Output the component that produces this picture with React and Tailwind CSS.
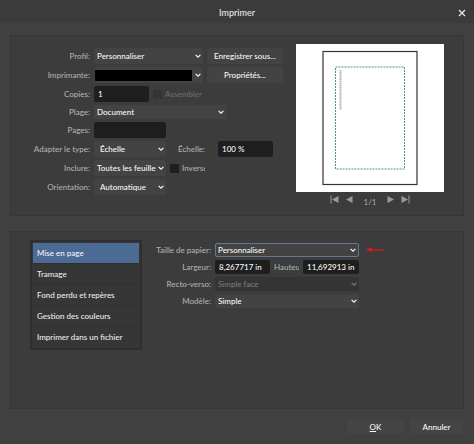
import React from "react";

const FONT = "font-['Lato','Open_Sans',sans-serif]";

function Chevron() {
  return (
    <svg viewBox="0 0 8 8" className="pointer-events-none absolute right-px top-1/2 size-2 -translate-y-1/2" fill="none" stroke="currentColor" strokeWidth="1.2">
      <path d="M1.6 2.8 4 5.2 6.4 2.8" />
    </svg>
  );
}

function Select({ id, value, className = "", pad = "pl-[3px]", look = "bg-[#434343] text-[#f8f8f8]", disabled = false }) {
  return (
    <div className={`relative flex h-full shrink-0 rounded-xs ${look} ${className}`}>
      <select id={id} disabled={disabled} defaultValue={value} className={`w-full appearance-none overflow-hidden bg-transparent pr-[10px] outline-none ${pad}`}>
        <option>{value}</option>
      </select>
      <Chevron />
    </div>
  );
}

function Field({ id, value, className }) {
  return (
    <input id={id} type="text" defaultValue={value} className={`h-full shrink-0 rounded-xs bg-[#1e1e1e] px-[4px] text-[#f8f8f8] outline-none ${className}`} />
  );
}

function Row({ id, label, labelWidth = "w-[64px]", height = "h-[16px]", children }) {
  return (
    <div className={`flex items-center gap-[4px] ${height}`}>
      <label htmlFor={id} className={`shrink-0 whitespace-nowrap text-right ${labelWidth}`}>{label}</label>
      {children}
    </div>
  );
}

function Check({ id, label, disabled, boxClass, className }) {
  return (
    <div className={`flex items-center gap-[3px] overflow-hidden whitespace-nowrap ${className}`}>
      <input id={id} type="checkbox" disabled={disabled} className={`size-[9px] shrink-0 appearance-none ${boxClass}`} />
      <label htmlFor={id}>{label}</label>
    </div>
  );
}

function NavButton({ label, d }) {
  return (
    <button type="button" aria-label={label} className="size-[9px] text-[#999999]">
      <svg viewBox="0 0 9 9" className="size-full" fill="currentColor"><path d={d} /></svg>
    </button>
  );
}

function Preview() {
  return (
    <div className="flex w-[148px] shrink-0 flex-col items-center">
      <svg viewBox="0 0 148 148" className="block w-full" fill="none" role="img" aria-label="Aperçu">
        <rect width="148" height="148" fill="#ffffff" />
        <rect x="27" y="7.5" width="94" height="133" stroke="#3b3035" strokeWidth="1.2" />
        <rect x="39.5" y="23" width="69" height="102" stroke="#4a9292" strokeWidth="1" strokeDasharray="2 1" />
        <path d="M44.5 26v40" stroke="#b9b9b9" strokeWidth="2" strokeDasharray="1.6 0.5" />
      </svg>
      <div className="flex h-[15px] items-center gap-[6px] text-[#a0a0a0]">
        <NavButton label="Première page" d="M0.5 0.5h1v8h-1zM8.5 1v7L2 4.5z" />
        <NavButton label="Page précédente" d="M7.5 1v7L1 4.5z" />
        <span className="w-[20px] pt-[4px] text-center">1/1</span>
        <NavButton label="Page suivante" d="M1.5 1v7L8 4.5z" />
        <NavButton label="Dernière page" d="M7.5 0.5h1v8h-1zM0.5 1v7L7 4.5z" />
      </div>
    </div>
  );
}

const sections = ["Mise en page", "Tramage", "Fond perdu et repères", "Gestion des couleurs", "Imprimer dans un fichier"];

export default function App() {
  return (
    <main className={`flex min-h-screen flex-col bg-[#404040] text-[8px] leading-[12px] font-medium text-[#b0b0b0] ${FONT}`}>
      <header className="grid h-[23px] grid-cols-[1fr_auto_1fr] items-center bg-[#3b3b3b] px-[7px] pt-[2px] text-[#e8e8e8]">
        <h1 className="col-start-2 text-[9px]">Imprimer</h1>
        <button type="button" aria-label="Fermer" className="size-[10px] justify-self-end">
          <svg viewBox="0 0 10 10" className="size-full" stroke="currentColor" strokeWidth="1.3"><path d="M2 2l6 6M8 2l-6 6" /></svg>
        </button>
      </header>

      <section className="mx-[10px] mt-[12px] flex h-[181px] justify-between border border-[#363636] bg-[#3c3c3c] pl-[15px] pr-[19px] pt-[8px]">
        <div className="flex flex-col gap-[3px] pt-[4px]">
          <Row id="profil" label="Profil:">
            <Select id="profil" value="Personnaliser" className="w-[109px]" />
            <button type="button" className="h-[16px] w-[76px] rounded-xs bg-[#434343] text-[#f8f8f8]">Enregistrer sous...</button>
          </Row>
          <Row id="imprimante" label="Imprimante:">
            <div className="relative flex h-full w-[109px] items-center rounded-xs bg-[#434343] pl-px text-[#f8f8f8]">
              <select id="imprimante" className="h-[11px] w-[97px] appearance-none bg-black outline-none" />
              <Chevron />
            </div>
            <button type="button" className="h-[16px] w-[76px] rounded-xs bg-[#434343] text-[#f8f8f8]">Propriétés...</button>
          </Row>
          <Row id="copies" label="Copies:">
            <Field id="copies" value="1" className="w-[55px]" />
            <Check id="assembler" label="Assembler" disabled boxClass="bg-[#343434]" className="text-[#6c6c6c]" />
          </Row>
          <Row id="plage" label="Plage:" height="h-[14px]">
            <Select id="plage" value="Document" className="w-[132px]" />
          </Row>
          <Row id="pages" label="Pages:">
            <Field id="pages" value="" className="w-[72px]" />
          </Row>
          <Row id="adapter" label="Adapter le type:">
            <Select id="adapter" value="Échelle" className="w-[72px]" pad="pl-[6px]" />
            <label htmlFor="echelle" className="w-[44px] pl-[8px]">Échelle:</label>
            <Field id="echelle" value="100 %" className="w-[55px]" />
          </Row>
          <Row id="inclure" label="Inclure:">
            <Select id="inclure" value="Toutes les feuilles" className="w-[72px]" />
            <Check id="inverse" label="Inverser" boxClass="bg-[#1e1e1e]" className="w-[35px]" />
          </Row>
          <Row id="orientation" label="Orientation:">
            <Select id="orientation" value="Automatique" className="w-[72px]" pad="pl-[6px]" />
          </Row>
        </div>
        <Preview />
      </section>

      <section className="mx-[10px] mt-[15px] flex h-[178px] items-start gap-[9px] border border-[#363636] bg-[#3c3c3c] pl-[19px] pt-[8px]">
        <nav className="w-[112px] shrink-0 border-2 border-[#2f2f2f] bg-[#363636] p-px">
          <ul className="divide-y divide-[#2f2f2f]">
            {sections.map((name, i) => (
              <li key={name}>
                <button type="button" className={`block h-[20px] w-full pl-[4px] text-left ${i === 0 ? "bg-[#4c6b94] text-[#f4f4f4]" : "text-[#ececec]"}`}>{name}</button>
              </li>
            ))}
          </ul>
        </nav>
        <div className="flex flex-col gap-[3px] pt-[3px]">
          <Row id="papier" label="Taille de papier:" labelWidth="w-[60px]" height="h-[14px]">
            <Select id="papier" value="Personnaliser" className="w-[144px]" pad="pl-[2px]" look="border border-[#647890] bg-[#434343] text-[#f8f8f8]" />
            <svg viewBox="0 0 20 6" className="ml-[3px] h-[6px] w-[20px]" fill="#d81a20"><path d="M0 2.5 6 0v2.2h12v1.2H6v1.8z" /></svg>
          </Row>
          <Row id="largeur" label="Largeur:" labelWidth="w-[60px]" height="h-[14px]">
            <Field id="largeur" value="8,267717 in" className="w-[55px]" />
            <label htmlFor="hauteur" className="w-[25px] overflow-hidden">Hauteur:</label>
            <Field id="hauteur" value="11,692913 in" className="w-[56px]" />
          </Row>
          <Row id="recto" label="Recto-verso:" labelWidth="w-[60px]" height="h-[14px]">
            <Select id="recto" value="Simple face" disabled className="w-[144px]" look="bg-[#343434] text-[#7a7a7a]" />
          </Row>
          <Row id="modele" label="Modèle:" labelWidth="w-[60px]" height="h-[14px]">
            <Select id="modele" value="Simple" className="w-[144px]" />
          </Row>
        </div>
      </section>

      <footer className="mt-[10px] flex justify-end gap-[6px] pr-[11px] text-[#f8f8f8]">
        <button type="button" className="h-[15px] w-[57px] rounded-xs bg-[#444444]"><u>O</u>K</button>
        <button type="button" className="h-[15px] w-[53px] rounded-xs bg-[#444444]">Annuler</button>
      </footer>
    </main>
  );
}
